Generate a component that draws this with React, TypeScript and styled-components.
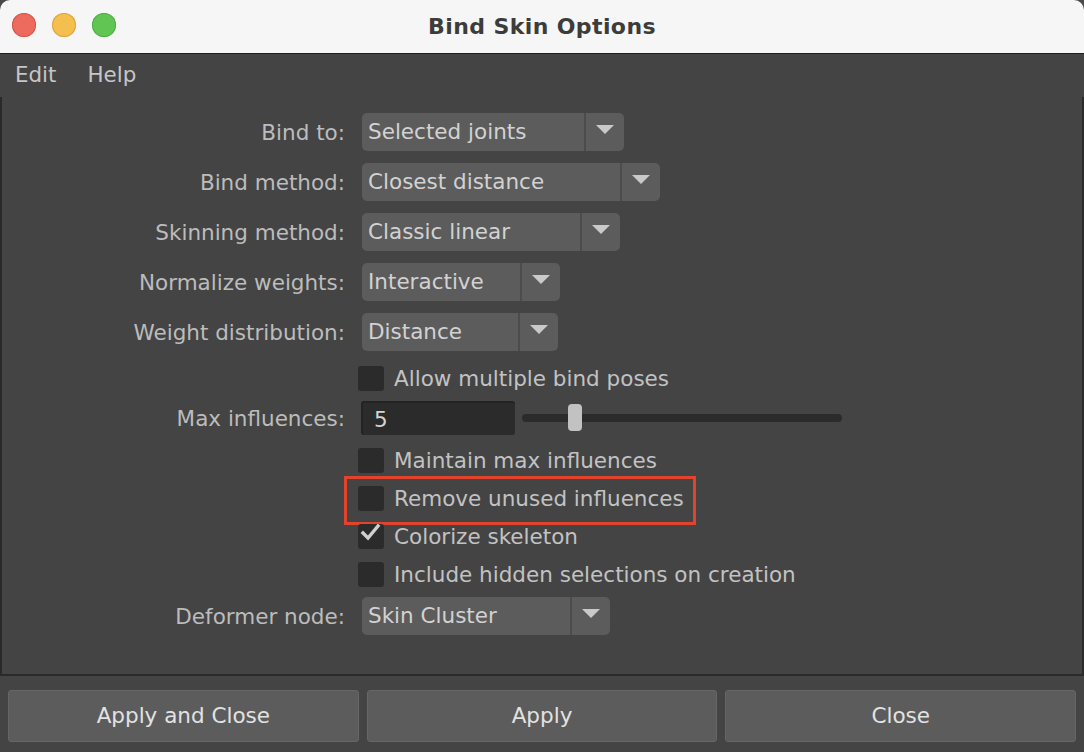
import styled, { createGlobalStyle } from 'styled-components';

const GlobalStyle = createGlobalStyle`
    html, body {
        margin: 0;
        padding: 0;
        background: #4a4a4a;
    }
    body {
        font-family: 'DejaVu Sans', 'Liberation Sans', sans-serif;
    }
`;

const Window = styled.div`
    width: 1084px;
    height: 752px;
    display: flex;
    flex-direction: column;
    background: #444444;
    border-radius: 10px 10px 0 0;
    overflow: hidden;
`;

const TitleBar = styled.header`
    position: relative;
    height: 53px;
    flex-shrink: 0;
    display: flex;
    align-items: center;
    justify-content: center;
    background: #f6f6f6;
    border-bottom: 1px solid #1f1f1f;
`;

const Lights = styled.div`
    position: absolute;
    left: 12px;
    top: 13px;
    display: flex;
    gap: 16px;
`;

const Light = styled.span<{ $color: string; $edge: string }>`
    width: 24px;
    height: 24px;
    border-radius: 50%;
    background: ${(p) => p.$color};
    box-shadow: inset 0 0 0 1px ${(p) => p.$edge};
`;

const Title = styled.h1`
    margin: 0;
    font-size: 22px;
    font-weight: bold;
    color: #3c3c3c;
    letter-spacing: 0.4px;
`;

const MenuBar = styled.nav`
    height: 43px;
    flex-shrink: 0;
    display: flex;
    align-items: center;
    gap: 31px;
    padding: 0 0 3px 15px;
    box-sizing: border-box;
`;

const MenuItem = styled.span`
    font-size: 21.4px;
    color: #c6c6c6;
`;

const Frame = styled.section`
    height: 579px;
    flex-shrink: 0;
    box-sizing: border-box;
    border: 2px solid #2a2a2a;
    border-top: none;
    padding-top: 10px;
`;

const FormRow = styled.div<{ $h: number }>`
    display: grid;
    grid-template-columns: 343px 1fr;
    column-gap: 17px;
    align-items: center;
    height: ${(p) => p.$h}px;
`;

const Label = styled.label`
    text-align: right;
    font-size: 21.5px;
    color: #bcbcbc;
    white-space: nowrap;
`;

const Dropdown = styled.div<{ $w: number }>`
    width: ${(p) => p.$w}px;
    height: 38px;
    display: flex;
    background: #5c5c5c;
    border-radius: 5px;
    box-sizing: border-box;
`;

const DropdownText = styled.span`
    flex: 1;
    display: flex;
    align-items: center;
    padding-left: 6px;
    padding-bottom: 1px;
    font-size: 21.5px;
    color: #d2d2d2;
    white-space: nowrap;
`;

const DropdownArrow = styled.span`
    width: 38px;
    display: flex;
    align-items: center;
    justify-content: center;
    border-left: 2px solid #4c4c4c;
    padding-bottom: 6px;
`;

const Option = styled.div`
    position: relative;
    display: flex;
    align-items: center;
    gap: 10px;
    margin-left: -4px;
`;

const Box = styled.span`
    width: 26px;
    height: 25px;
    flex-shrink: 0;
    display: flex;
    align-items: flex-start;
    justify-content: center;
    background: #2b2b2b;
    border-radius: 3px;
`;

const OptionText = styled.span`
    font-size: 21.5px;
    color: #c2c2c2;
    white-space: nowrap;
`;

const Highlight = styled.span`
    position: absolute;
    left: -14px;
    top: calc(50% - 22px);
    width: 352px;
    height: 49px;
    box-sizing: border-box;
    border: 3px solid #e2432c;
    pointer-events: none;
`;

const SliderLine = styled.div`
    display: flex;
    align-items: center;
    gap: 7px;
    margin-left: -1px;
`;

const NumberField = styled.div`
    width: 154px;
    height: 34px;
    box-sizing: border-box;
    display: flex;
    align-items: center;
    padding-left: 11px;
    background: #2b2b2b;
    border-top: 2px solid #232323;
    border-left: 2px solid #232323;
    border-radius: 3px;
    font-size: 21.5px;
    color: #d4d4d4;
`;

const Track = styled.div`
    position: relative;
    width: 320px;
    height: 8px;
    background: #2b2b2b;
    border-radius: 4px;
`;

const Handle = styled.span`
    position: absolute;
    left: 46px;
    top: -10px;
    width: 14px;
    height: 27px;
    background: #c2c2c2;
    border-radius: 4px;
`;

const Footer = styled.footer`
    flex: 1;
    display: flex;
    gap: 8px;
    padding: 14px 8px 10px;
    box-sizing: border-box;
`;

const Button = styled.button`
    flex: 1;
    height: 52px;
    background: #5c5c5c;
    border: 1px solid #666666;
    border-radius: 3px;
    font-family: inherit;
    font-size: 21.5px;
    color: #e2e2e2;
    padding: 0 0 1px;
`;

function Arrow() {
    return (
        <svg width="18" height="9" viewBox="0 0 18 9">
            <polygon points="0,0 18,0 9,9" fill="#c9c9c9" />
        </svg>
    );
}

function Check() {
    return (
        <svg width="22" height="18" viewBox="0 0 22 18">
            <polyline
                points="3,9 8,14 18,2"
                fill="none"
                stroke="#d0d0d0"
                strokeWidth="3.4"
                strokeLinecap="square"
            />
        </svg>
    );
}

const dropdowns = [
    { label: 'Bind to:', value: 'Selected joints', width: 262 },
    { label: 'Bind method:', value: 'Closest distance', width: 298 },
    { label: 'Skinning method:', value: 'Classic linear', width: 258 },
    { label: 'Normalize weights:', value: 'Interactive', width: 198 },
    { label: 'Weight distribution:', value: 'Distance', width: 196 },
];

function Select({ value, width }: { value: string; width: number }) {
    return (
        <Dropdown $w={width}>
            <DropdownText>{value}</DropdownText>
            <DropdownArrow>
                <Arrow />
            </DropdownArrow>
        </Dropdown>
    );
}

function CheckOption({
    text,
    checked,
    marked,
}: {
    text: string;
    checked?: boolean;
    marked?: boolean;
}) {
    return (
        <Option>
            <Box>{checked && <Check />}</Box>
            <OptionText>{text}</OptionText>
            {marked && <Highlight />}
        </Option>
    );
}

export default function App() {
    return (
        <>
            <GlobalStyle />
            <Window>
                <TitleBar>
                    <Lights>
                        <Light $color="#ed6a5e" $edge="#d4574c" />
                        <Light $color="#f5bf4f" $edge="#d9a53d" />
                        <Light $color="#61c554" $edge="#4fae44" />
                    </Lights>
                    <Title>Bind Skin Options</Title>
                </TitleBar>
                <MenuBar>
                    <MenuItem>Edit</MenuItem>
                    <MenuItem>Help</MenuItem>
                </MenuBar>
                <Frame>
                    {dropdowns.map((item) => (
                        <FormRow $h={50} key={item.label}>
                            <Label>{item.label}</Label>
                            <Select value={item.value} width={item.width} />
                        </FormRow>
                    ))}
                    <FormRow $h={42}>
                        <span />
                        <CheckOption text="Allow multiple bind poses" />
                    </FormRow>
                    <FormRow $h={38}>
                        <Label>Max influences:</Label>
                        <SliderLine>
                            <NumberField>5</NumberField>
                            <Track>
                                <Handle />
                            </Track>
                        </SliderLine>
                    </FormRow>
                    <FormRow $h={46}>
                        <span />
                        <CheckOption text="Maintain max influences" />
                    </FormRow>
                    <FormRow $h={30}>
                        <span />
                        <CheckOption text="Remove unused influences" marked />
                    </FormRow>
                    <FormRow $h={46}>
                        <span />
                        <CheckOption text="Colorize skeleton" checked />
                    </FormRow>
                    <FormRow $h={30}>
                        <span />
                        <CheckOption text="Include hidden selections on creation" />
                    </FormRow>
                    <FormRow $h={54}>
                        <Label>Deformer node:</Label>
                        <Select value="Skin Cluster" width={248} />
                    </FormRow>
                </Frame>
                <Footer>
                    <Button>Apply and Close</Button>
                    <Button>Apply</Button>
                    <Button>Close</Button>
                </Footer>
            </Window>
        </>
    );
}
